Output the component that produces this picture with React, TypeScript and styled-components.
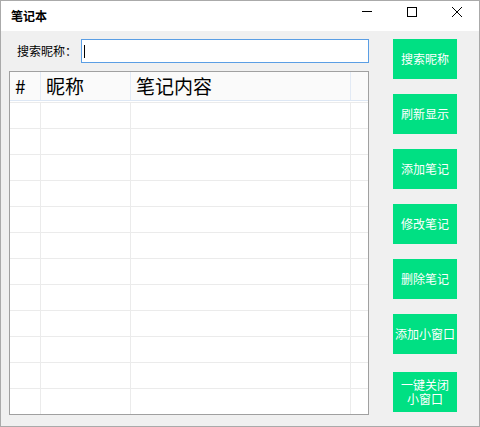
import React from "react";
import styled, { createGlobalStyle } from "styled-components";

const GlobalStyle = createGlobalStyle`
  html, body {
    margin: 0;
    padding: 0;
    background: #f0f0f0;
  }
  body {
    font-family: "Noto Sans CJK SC", "Noto Sans", sans-serif;
    color: #000;
  }
  * { box-sizing: border-box; }
`;

const Window = styled.div`
  width: 480px;
  height: 427px;
  border: 1px solid #aaaaaa;
  background: #f0f0f0;
  display: flex;
  flex-direction: column;
`;

const TitleBar = styled.div`
  height: 30px;
  flex: 0 0 30px;
  background: #ffffff;
  display: flex;
  align-items: flex-start;
`;

const Title = styled.div`
  padding-left: 10px;
  font-size: 12px;
  font-weight: 700;
  line-height: 30px;
`;

const Controls = styled.div`
  margin-left: auto;
  display: flex;
`;

const CaptionButton = styled.div`
  width: 45px;
  height: 22px;
  display: flex;
  align-items: center;
  justify-content: center;
`;

const Body = styled.div`
  flex: 1;
  display: flex;
  gap: 24px;
  padding: 8px 22px 11px 8px;
`;

const LeftColumn = styled.div`
  width: 360px;
  display: flex;
  flex-direction: column;
`;

const SearchRow = styled.div`
  height: 24px;
  display: flex;
  align-items: center;
  margin-bottom: 8px;
`;

const Label = styled.div`
  flex: 0 0 72px;
  padding-left: 8px;
  font-size: 12px;
  line-height: 24px;
  white-space: nowrap;
`;

const SearchBox = styled.div`
  flex: 1;
  height: 24px;
  border: 1px solid #5a9ee4;
  background: #ffffff;
  display: flex;
  align-items: center;
  padding-left: 2px;
`;

const Caret = styled.span`
  display: inline-block;
  width: 1px;
  height: 13px;
  background: #000;
`;

const Grid = styled.div`
  height: 344px;
  border: 1px solid #a0a0a0;
  background: #ffffff;
  overflow: hidden;
`;

const COLS = "31px 90px 220px 1fr";

const HeaderRow = styled.div`
  display: grid;
  grid-template-columns: ${COLS};
  height: 29px;
  background: #fafafa;
  border-bottom: 1px solid #dde7f4;
`;

const HeaderCell = styled.div<{ $last?: boolean }>`
  border-right: ${(p) => (p.$last ? "none" : "1px solid #e2eaf5")};
  padding-left: 5px;
  font-size: 19px;
  line-height: 28px;
  white-space: nowrap;
  overflow: hidden;
`;

const Rows = styled.div`
  margin-top: 1px;
  border-top: 1px solid #ebebeb;
`;

const Row = styled.div`
  display: grid;
  grid-template-columns: ${COLS};
  height: 26px;
  border-bottom: 1px solid #ebebeb;
`;

const Cell = styled.div<{ $last?: boolean }>`
  border-right: ${(p) => (p.$last ? "none" : "1px solid #ebebeb")};
`;

const ButtonColumn = styled.div`
  width: 64px;
  display: flex;
  flex-direction: column;
  gap: 15px;
`;

const ActionButton = styled.button<{ $extraGap?: number }>`
  width: 64px;
  height: 40px;
  flex: 0 0 40px;
  margin-top: ${(p) => p.$extraGap ?? 0}px;
  padding: 0;
  border: none;
  background: #00e083;
  color: #ffffff;
  font-family: "Noto Sans CJK SC", "Noto Sans", sans-serif;
  font-size: 12px;
  line-height: 14px;
  display: flex;
  align-items: center;
  justify-content: center;
  text-align: center;
  white-space: nowrap;
`;

const columns = ["#", "昵称", "笔记内容", ""];

const actions: { lines: string[]; extraGap?: number }[] = [
  { lines: ["搜索昵称"] },
  { lines: ["刷新显示"] },
  { lines: ["添加笔记"] },
  { lines: ["修改笔记"] },
  { lines: ["删除笔记"] },
  { lines: ["添加小窗口"] },
  { lines: ["一键关闭", "小窗口"], extraGap: 3 },
];

const MinimizeIcon = () => (
  <svg width="10" height="10" viewBox="0 0 10 10">
    <line x1="0" y1="4.5" x2="10" y2="4.5" stroke="#000" strokeWidth="1" />
  </svg>
);

const MaximizeIcon = () => (
  <svg width="10" height="10" viewBox="0 0 10 10">
    <rect x="0.5" y="0.5" width="9" height="9" fill="none" stroke="#000" strokeWidth="1" />
  </svg>
);

const CloseIcon = () => (
  <svg width="10" height="10" viewBox="0 0 10 10">
    <path d="M0 0 L10 10 M10 0 L0 10" stroke="#000" strokeWidth="1" />
  </svg>
);

export default function App() {
  return (
    <>
      <GlobalStyle />
      <Window>
        <TitleBar>
          <Title>笔记本</Title>
          <Controls>
            <CaptionButton>
              <MinimizeIcon />
            </CaptionButton>
            <CaptionButton>
              <MaximizeIcon />
            </CaptionButton>
            <CaptionButton>
              <CloseIcon />
            </CaptionButton>
          </Controls>
        </TitleBar>
        <Body>
          <LeftColumn>
            <SearchRow>
              <Label>搜索昵称：</Label>
              <SearchBox>
                <Caret />
              </SearchBox>
            </SearchRow>
            <Grid>
              <HeaderRow>
                {columns.map((c, i) => (
                  <HeaderCell key={i} $last={i === columns.length - 1}>
                    {c}
                  </HeaderCell>
                ))}
              </HeaderRow>
              <Rows>
                {Array.from({ length: 12 }).map((_, r) => (
                  <Row key={r}>
                    {columns.map((_, i) => (
                      <Cell key={i} $last={i === columns.length - 1} />
                    ))}
                  </Row>
                ))}
              </Rows>
            </Grid>
          </LeftColumn>
          <ButtonColumn>
            {actions.map((a, i) => (
              <ActionButton key={i} $extraGap={a.extraGap}>
                <span>
                  {a.lines.map((l, j) => (
                    <React.Fragment key={j}>
                      {j > 0 && <br />}
                      {l}
                    </React.Fragment>
                  ))}
                </span>
              </ActionButton>
            ))}
          </ButtonColumn>
        </Body>
      </Window>
    </>
  );
}
